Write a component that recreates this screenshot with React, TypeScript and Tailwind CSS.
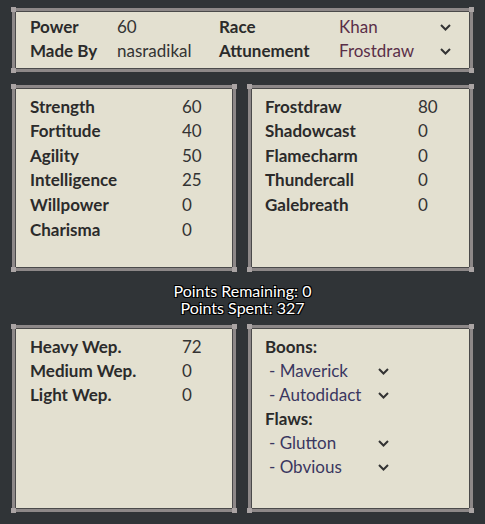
import React from "react";

const Chevron = () => (
  <svg width="11" height="7" viewBox="0 0 11 7" className="block">
    <path d="M1 1 L5.5 5.5 L10 1" fill="none" stroke="#333" strokeWidth="2" />
  </svg>
);

const Corner = ({ pos }: { pos: string }) => (
  <div className={`absolute w-[5px] h-[5px] bg-[#aaa4a4] ${pos}`} />
);

const Panel = ({ className, children }: { className?: string; children: React.ReactNode }) => (
  <div className={`relative border-[3px] border-[#8d8888] bg-[#e3e0d0] shadow-[inset_0_0_0_1px_#4a4a4a] ${className ?? ""}`}>
    <Corner pos="-top-[4px] -left-[4px]" />
    <Corner pos="-top-[4px] -right-[4px]" />
    <Corner pos="-bottom-[4px] -left-[4px]" />
    <Corner pos="-bottom-[4px] -right-[4px]" />
    {children}
  </div>
);

const StatRow = ({ label, value, labelW }: { label: string; value: string; labelW: string }) => (
  <div className="flex items-center h-[24.6px]">
    <div className={`${labelW} font-bold text-[#2b2b2b]`}>{label}</div>
    <div className="text-[#333]">{value}</div>
  </div>
);

const Pick = ({ text }: { text: string }) => (
  <div className="flex items-center h-6 pl-[4px]">
    <div className="w-[109px] text-[#3a3760]">- {text}</div>
    <Chevron />
  </div>
);

export default function App() {
  return (
    <div
      className="w-[485px] h-[524px] bg-[#303437] px-[12px] pt-[8px] text-[17px] flex flex-col"
      style={{ fontFamily: "Lato, 'Noto Sans', sans-serif" }}
    >
      <Panel className="h-[64px] pt-[4px] pl-[15px]">
        <div className="flex items-center h-6">
          <div className="w-[87px] font-bold text-[#2b2b2b]">Power</div>
          <div className="w-[102px] text-[#333]">60</div>
          <div className="w-[120px] font-bold text-[#2b2b2b]">Race</div>
          <div className="w-[101px] text-[#5a2f48]">Khan</div>
          <Chevron />
        </div>
        <div className="flex items-center h-6">
          <div className="w-[87px] font-bold text-[#2b2b2b]">Made By</div>
          <div className="w-[102px] text-[#333]">nasradikal</div>
          <div className="w-[120px] font-bold text-[#2b2b2b]">Attunement</div>
          <div className="w-[101px] text-[#5a2f48]">Frostdraw</div>
          <Chevron />
        </div>
      </Panel>

      <div className="flex gap-[12px] mt-[13px]">
        <Panel className="w-[224px] h-[186px] pt-[6px] pl-[15px]">
          <StatRow label="Strength" value="60" labelW="w-[152px]" />
          <StatRow label="Fortitude" value="40" labelW="w-[152px]" />
          <StatRow label="Agility" value="50" labelW="w-[152px]" />
          <StatRow label="Intelligence" value="25" labelW="w-[152px]" />
          <StatRow label="Willpower" value="0" labelW="w-[152px]" />
          <StatRow label="Charisma" value="0" labelW="w-[152px]" />
        </Panel>
        <Panel className="w-[225px] h-[186px] pt-[6px] pl-[14px]">
          <StatRow label="Frostdraw" value="80" labelW="w-[153px]" />
          <StatRow label="Shadowcast" value="0" labelW="w-[153px]" />
          <StatRow label="Flamecharm" value="0" labelW="w-[153px]" />
          <StatRow label="Thundercall" value="0" labelW="w-[153px]" />
          <StatRow label="Galebreath" value="0" labelW="w-[153px]" />
        </Panel>
      </div>

      <div className="mt-[11px] h-[43px] flex flex-col items-center text-white text-[16px] leading-[17px] [text-shadow:1px_1px_0_#000,-1px_-1px_0_#000,1px_-1px_0_#000,-1px_1px_0_#000]">
        <div>Points Remaining: 0</div>
        <div>Points Spent: 327</div>
      </div>

      <div className="flex gap-[12px]">
        <Panel className="w-[224px] h-[187px] pt-[7px] pl-[15px]">
          <div className="flex items-center h-6">
            <div className="w-[152px] font-bold text-[#2b2b2b]">Heavy Wep.</div>
            <div className="text-[#333]">72</div>
          </div>
          <div className="flex items-center h-6">
            <div className="w-[152px] font-bold text-[#2b2b2b]">Medium Wep.</div>
            <div className="text-[#333]">0</div>
          </div>
          <div className="flex items-center h-6">
            <div className="w-[152px] font-bold text-[#2b2b2b]">Light Wep.</div>
            <div className="text-[#333]">0</div>
          </div>
        </Panel>
        <Panel className="w-[225px] h-[187px] pt-[7px] pl-[14px]">
          <div className="flex items-center h-6 font-bold text-[#2b2b2b]">Boons:</div>
          <Pick text="Maverick" />
          <Pick text="Autodidact" />
          <div className="flex items-center h-6 font-bold text-[#2b2b2b]">Flaws:</div>
          <Pick text="Glutton" />
          <Pick text="Obvious" />
        </Panel>
      </div>
    </div>
  );
}
